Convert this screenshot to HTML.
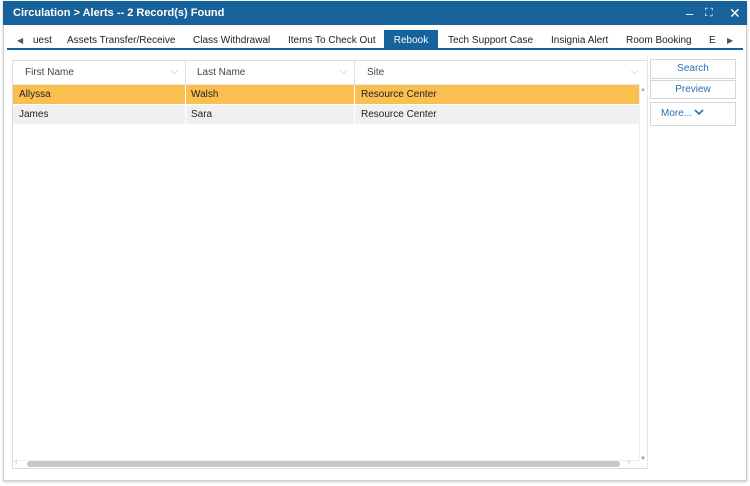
<!DOCTYPE html>
<html><head><style>
body{margin:0;width:750px;height:486px;background:#fff;font-family:"Liberation Sans",Arial,sans-serif;font-size:10px;position:relative;overflow:hidden}
.abs{position:absolute}
.win{left:3px;top:1px;width:742px;height:478px;border:1px solid #cfcfcf;box-shadow:0 1px 3px rgba(0,0,0,.2)}
.title{left:3px;top:1px;width:744px;height:24px;background:#17629b;color:#fff;font-weight:bold;font-size:11px;line-height:25px}
.tab{top:32px;height:18px;line-height:18px;color:#222;font-size:10px}
.cell{position:absolute;line-height:20px;font-size:10px;color:#222}
.btn{left:650px;width:84px;border:1px solid #d6d6d6;color:#2a6fb3;text-align:center;font-size:10px;background:#fff}
</style></head><body>
<div class="abs win"></div>
<div class="abs title"><span style="margin-left:10px">Circulation &gt; Alerts -- 2 Record(s) Found</span>
<span class="abs" style="left:683px;top:0;font-weight:normal;font-size:13px">–</span>
<span class="abs" style="left:702px;top:0;font-weight:normal;font-size:11px">⛶</span>
<span class="abs" style="left:726px;top:0;font-weight:normal;font-size:14px">✕</span></div>
<span class="abs tab" style="left:17px;font-size:8px;color:#555">◀</span>
<span class="abs tab" style="left:33px">uest</span>
<span class="abs tab" style="left:67px">Assets Transfer/Receive</span>
<span class="abs tab" style="left:193px">Class Withdrawal</span>
<span class="abs tab" style="left:288px">Items To Check Out</span>
<div class="abs tab" style="left:384px;top:30px;width:54px;height:19px;background:#17629b;color:#fff;text-align:center;line-height:21px">Rebook</div>
<span class="abs tab" style="left:448px">Tech Support Case</span>
<span class="abs tab" style="left:551px">Insignia Alert</span>
<span class="abs tab" style="left:626px">Room Booking</span>
<span class="abs tab" style="left:709px">E</span>
<span class="abs tab" style="left:727px;font-size:8px;color:#555">▶</span>
<div class="abs" style="left:7px;top:48px;width:736px;height:2px;background:#17629b"></div>

<div class="abs" style="left:12px;top:60px;width:634px;height:407px;border:1px solid #dcdcdc"></div>
<div class="abs" style="left:13px;top:61px;width:626px;height:23px;border-bottom:1px solid #e6e6e6">
<span class="cell" style="left:12px;top:2px;color:#444">First Name</span><span class="cell" style="left:158px;top:0;color:#aaa;font-size:9px">⌵</span>
<span class="cell" style="left:184px;top:2px;color:#444">Last Name</span><span class="cell" style="left:327px;top:0;color:#aaa;font-size:9px">⌵</span>
<span class="cell" style="left:354px;top:2px;color:#444">Site</span><span class="cell" style="left:618px;top:0;color:#aaa;font-size:9px">⌵</span>
</div>
<div class="abs" style="left:185px;top:61px;width:1px;height:64px;background:#e0e0e0"></div>
<div class="abs" style="left:354px;top:61px;width:1px;height:64px;background:#e0e0e0"></div>
<div class="abs" style="left:13px;top:85px;width:626px;height:19px;background:#fbbf50">
<span class="cell" style="left:6px;top:0">Allyssa</span><span class="cell" style="left:178px;top:0">Walsh</span><span class="cell" style="left:348px;top:0">Resource Center</span></div>
<div class="abs" style="left:13px;top:105px;width:626px;height:19px;background:#f0f0f0">
<span class="cell" style="left:6px;top:0">James</span><span class="cell" style="left:178px;top:0">Sara</span><span class="cell" style="left:348px;top:0">Resource Center</span></div>
<div class="abs" style="left:185px;top:85px;width:1px;height:40px;background:#fff"></div>
<div class="abs" style="left:354px;top:85px;width:1px;height:40px;background:#fff"></div>
<div class="abs" style="left:639px;top:84px;width:8px;height:376px;background:#fff;border-left:1px solid #eee"></div>
<span class="abs" style="left:640px;top:87px;font-size:6px;color:#aaa">▲</span>
<span class="abs" style="left:640px;top:456px;font-size:6px;color:#999">▼</span>
<div class="abs" style="left:13px;top:460px;width:626px;height:8px;border-top:1px solid #eee"></div>
<div class="abs" style="left:27px;top:461px;width:593px;height:6px;background:#c8c8c8;border-radius:3px"></div>
<span class="abs" style="left:15px;top:459px;font-size:7px;color:#999">‹</span>
<span class="abs" style="left:628px;top:459px;font-size:7px;color:#999">›</span>

<div class="abs btn" style="top:59px;height:18px;line-height:18px">Search</div>
<div class="abs btn" style="top:80px;height:17px;line-height:17px">Preview</div>
<div class="abs btn" style="top:102px;height:22px;line-height:22px;text-align:left"><span style="margin-left:10px">More...</span><svg width="10" height="7" style="margin-left:2px" viewBox="0 0 10 7"><path d="M1 1L5 5L9 1" stroke="#2a6fb3" stroke-width="1.6" fill="none"/></svg></div>
<div class="abs" style="left:647px;top:56px;width:1px;height:412px;background:#e6e6e6"></div>
</body></html>
